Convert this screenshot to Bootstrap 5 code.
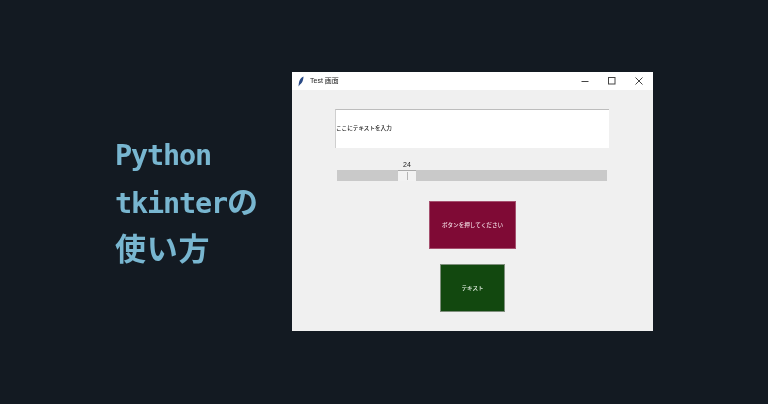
<!DOCTYPE html>
<html lang="ja">
<head>
<meta charset="utf-8">
<title>Python tkinterの使い方</title>
<link href="https://cdn.jsdelivr.net/npm/bootstrap@5.3.0/dist/css/bootstrap.min.css" rel="stylesheet">
<style>
html,body{height:404px;overflow:hidden}
body{background:#131a22;font-family:"Liberation Sans","Noto Sans CJK JP",sans-serif}
.stage{height:404px;padding:72px 115px 73px 115px}
.headline{width:177px;margin:60px 0 0 0;font:700 28.5px/47.5px "DejaVu Sans Mono","Noto Sans CJK JP",monospace;letter-spacing:-1.16px;color:#78b6d0;filter:blur(.3px)}
.jp-big{font-size:31px;font-weight:700;font-family:"Noto Sans CJK JP",sans-serif;line-height:0;letter-spacing:.7px}
.win{width:361px;height:259px;background:#f0f0f0;color:#222}
.tbar{height:18px;background:#fff;font-size:7px;padding:0 8px 0 5px;filter:blur(.35px)}
.tbar-ico{width:8px;height:11px;margin-right:5px}
.ctl{width:12px;height:12px;margin-left:15px}
.ctl:first-of-type{margin-left:0}
.tk-body{padding-top:19px}
.entry{width:274px;height:39px;margin-left:43px;padding-bottom:2px;background:#fff;border-top:1px solid #bdbdbd;border-left:1px solid #cfcfcf;font-size:5.6px;font-weight:500;filter:blur(.2px)}
.scale-wrap{width:270px;margin:12px 0 0 45px}
.scale-val{font-size:7px;line-height:10px;height:10px;width:18px;margin-left:61px;filter:blur(.3px)}
.trough{height:11px;background:#c9c9c9;padding-left:61px}
.thumb{width:18px;height:11px;background:#f2f2f2;border-top:1px solid #aaa}
.thumb-sep{width:1px;background:#b5b5b5;height:8px;margin:1px auto 0}
.tkbtn{color:#f0d8e0;font-size:5.6px;font-weight:500;filter:blur(.2px)}
.tk-red{width:87px;height:48px;margin:20px 0 0 137px;background:#7f0a35;border:1px solid #a5506e}
.tk-green{width:65px;height:48px;margin:15px 0 0 148px;background:#12480f;border:1px solid #7f8f7d;color:#e4efe2}
</style>
</head>
<body class="m-0">
<div class="stage d-flex justify-content-between">
  <div class="headline">Python<br>tkinter<span class="jp-big">の</span><br><span class="jp-big">使い方</span></div>
  <div class="win flex-shrink-0">
    <div class="tbar d-flex align-items-center">
      <svg class="tbar-ico" viewBox="0 0 8 11"><path d="M6.5.5C4 1.5 2.2 4 1.8 7.5L1.5 10.5 3 8.5C5 7.5 6.5 4 6.5.5Z" fill="#2a4a86"/></svg>
      <span>Test 画面</span>
      <div class="ms-auto d-flex align-items-center">
        <svg class="ctl" viewBox="0 0 12 12"><path d="M2.5 6.5h7" stroke="#444" fill="none"/></svg>
        <svg class="ctl" viewBox="0 0 12 12"><rect x="2.5" y="2.5" width="6.5" height="6.5" stroke="#444" fill="none"/></svg>
        <svg class="ctl" viewBox="0 0 12 12"><path d="M2.5 2.5l7 7M9.5 2.5l-7 7" stroke="#444" fill="none"/></svg>
      </div>
    </div>
    <div class="tk-body">
      <div class="entry d-flex align-items-center">ここにテキストを入力</div>
      <div class="scale-wrap">
        <div class="scale-val text-center">24</div>
        <div class="trough"><div class="thumb"><div class="thumb-sep"></div></div></div>
      </div>
      <div class="tkbtn tk-red d-flex align-items-center justify-content-center">ボタンを押してください</div>
      <div class="tkbtn tk-green d-flex align-items-center justify-content-center">テキスト</div>
    </div>
  </div>
</div>
<script src="https://cdn.jsdelivr.net/npm/bootstrap@5.3.0/dist/js/bootstrap.bundle.min.js"></script>
</body>
</html>
